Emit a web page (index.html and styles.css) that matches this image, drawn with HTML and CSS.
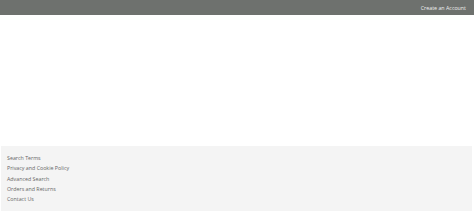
FILE: index.html
```html
<!DOCTYPE html>
<html lang="en">
<head>
  <meta charset="UTF-8">
  <title>Store</title>
  <link rel="stylesheet" href="styles.css">
</head>
<body>

<div class="panel">
  <a class="panel-link" href="#">Create an Account</a>
</div>

<main class="page-main"></main>

<footer class="page-footer">
  <ul class="footer-links">
    <li><a href="#">Search Terms</a></li>
    <li><a href="#">Privacy and Cookie Policy</a></li>
    <li><a href="#">Advanced Search</a></li>
    <li><a href="#">Orders and Returns</a></li>
    <li><a href="#">Contact Us</a></li>
  </ul>
</footer>

</body>
</html>
```

FILE: styles.css
```css
* { box-sizing: border-box; margin: 0; padding: 0; }
body {
  font-family: "Open Sans", "Liberation Sans", sans-serif;
  background: #fff;
  color: #333;
}
.panel {
  height: 15px;
  background: #6e716e;
  display: flex;
  justify-content: flex-end;
  align-items: center;
  padding-right: 8px;
}
.panel-link {
  color: #f0f0f0;
  font-size: 5.3px;
  text-decoration: none;
}
.page-main {
  height: 131px;
}
.page-footer {
  background: #f4f4f4;
  height: 65px;
  margin: 0 2px 0 1px;
  padding: 7px 6px;
}
.footer-links { list-style: none; }
.footer-links li {
  font-size: 5.3px;
  line-height: 10.3px;
}
.footer-links a {
  color: #666;
  text-decoration: none;
}
```
